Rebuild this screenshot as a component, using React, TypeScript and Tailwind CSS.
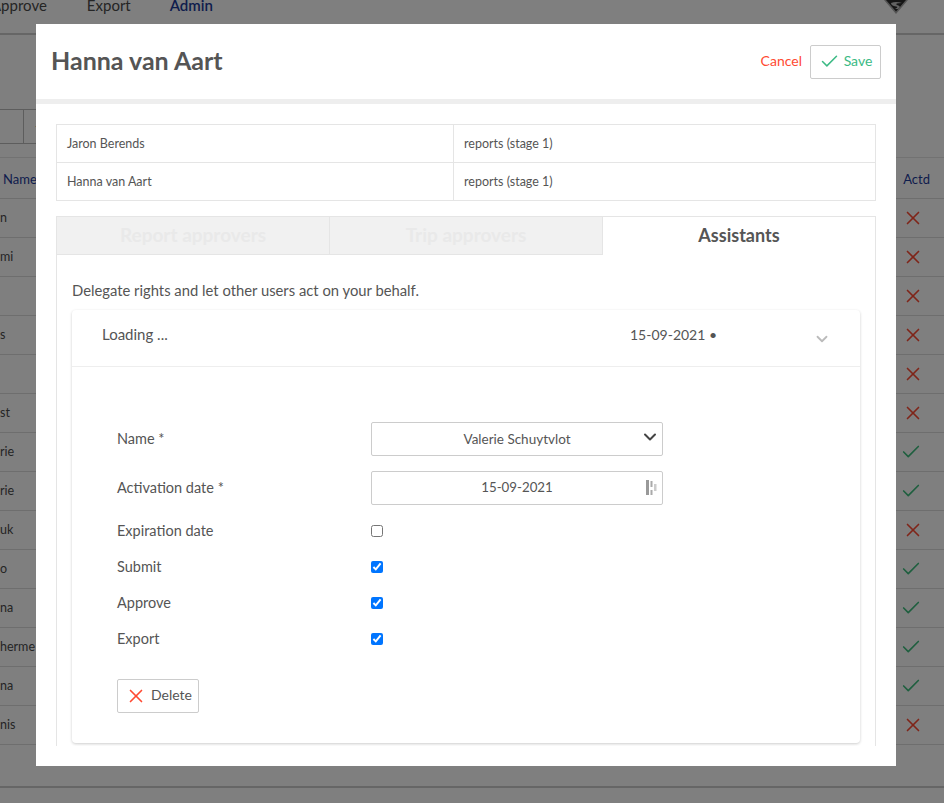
import React from "react";
import { X, Check, ChevronDown } from "lucide-react";

const rows: [string, boolean][] = [
  ["n", false], ["mi", false], ["", false], ["s", false], ["", false], ["st", false], ["rie", true],
  ["rie", true], ["uk", false], ["o", true], ["na", true], ["herme", true], ["na", true], ["nis", false],
];

function Background() {
  return (
    <div className="h-[803px] bg-white text-[13px] text-[#4a4a4a] overflow-hidden">
      <div className="h-[35px] border-b-2 border-[#ccc] flex items-start relative">
        <div className="flex gap-[40px] -ml-[9px] -mt-[5px] text-[15px] leading-[20px]">
          <span>Approve</span>
          <span>Export</span>
          <span className="text-[#1d3a9a] font-semibold -ml-[1px]">Admin</span>
        </div>
        <svg className="absolute left-[884px] top-0" width="24" height="14" viewBox="0 0 24 14">
          <path d="M0 0 L24 0 L12 14 Z" fill="#aaa" />
          <path d="M2 0 L22 0 L12 11.5 Z" fill="#2a2a2a" />
          <path d="M7 3 Q12 1 18 3 Q10 3 13 5 Q18 6 14 9 L11 9 Q15 7 12 6.5 Q7 5.5 7 3 Z" fill="#c4c4c4" />
        </svg>
      </div>
      <div className="h-[74px]" />
      <div className="h-[35px] w-[600px] border-y border-[#bbb] flex items-center">
        <div className="w-[24px] h-full border-r border-[#bbb]" />
        <span className="ml-[11px] text-[#555]">-</span>
      </div>
      <div className="h-[13px]" />
      <div className="h-[42px] pt-[4px] border-t border-[#e4e4e4] border-b border-b-[#ddd] flex items-center justify-between pr-[14px] text-[#1d3a9a]">
        <span className="pl-[3px]">Name</span>
        <span>Actd</span>
      </div>
      {rows.map(([t, ok], i) => (
        <div key={i} className="h-[39px] border-b border-[#ddd] flex items-center justify-between pr-[20px]">
          <span className="text-[12.5px]">{t}</span>
          {ok ? (
            <Check size={22} strokeWidth={1.8} className="text-[#3fbf7f] mr-[2px]" />
          ) : (
            <X size={22} strokeWidth={1.8} className="text-[#ff4a32]" />
          )}
        </div>
      ))}
      <div className="h-[43px] border-b-2 border-[#ccc]" />
    </div>
  );
}

function Field({ label, children }: { label: string; children: React.ReactNode }) {
  return (
    <div className="flex items-center min-h-[34px]">
      <span className="w-[254px] text-[14.5px] text-[#555] pb-[1px]">{label}</span>
      {children}
    </div>
  );
}

function DateGlyph() {
  return (
    <svg width="11" height="15" viewBox="0 0 11 15" className="absolute right-[5px] top-[8px]">
      <rect x="0" y="0" width="3" height="15" fill="#999" />
      <rect x="4.5" y="1" width="2" height="6" fill="#aaa" />
      <rect x="4.5" y="10" width="2" height="5" fill="#aaa" />
      <rect x="8" y="4" width="2.5" height="7" fill="#ccc" />
    </svg>
  );
}

function Modal() {
  return (
    <div className="fixed left-[36px] top-[24px] w-[860px] h-[742px] bg-white overflow-hidden text-[#555]">
      <div className="h-[80px] border-b-[5px] border-[#eee] flex items-center justify-between pl-[15px] pr-[15px]">
        <h1 className="text-[25px] font-bold pb-[2px]">Hanna van Aart</h1>
        <div className="flex items-center gap-[8px]">
          <span className="text-[14px] text-[#ff4a32] pb-[2px]">Cancel</span>
          <button className="w-[71px] h-[34px] border border-[#ccc] rounded-[2px] flex items-center justify-center gap-[4px] text-[14px] text-[#3cba85]">
            <Check size={21} strokeWidth={1.7} />
            <span className="pb-[2px]">Save</span>
          </button>
        </div>
      </div>
      <div className="px-[20px] pt-[20px]">
        <div className="border border-[#e5e5e5] text-[12.5px]">
          {["Jaron Berends", "Hanna van Aart"].map((n, i) => (
            <div key={n} className={`flex items-center ${i === 0 ? "h-[38px] border-b border-[#e5e5e5]" : "h-[37px]"}`}>
              <span className="w-[397px] pl-[10px] pt-[1px] self-stretch flex items-center border-r border-[#e5e5e5]">{n}</span>
              <span className="pl-[10px] pt-[1px]">reports (stage 1)</span>
            </div>
          ))}
        </div>
        <div className="mt-[15px] border-x border-t border-[#e5e5e5] h-[530px] overflow-hidden">
          <div className="flex h-[38px] text-[19px] font-bold text-center">
            <div className="w-[273px] bg-[#f1f1f1] border-r border-b border-[#e5e5e5] text-[#e9e9e9] flex items-center justify-center">Report approvers</div>
            <div className="w-[272px] bg-[#f1f1f1] border-b border-[#e5e5e5] text-[#e9e9e9] flex items-center justify-center">Trip approvers</div>
            <div className="flex-1 border-l border-[#e5e5e5] text-[18px] text-[#555] flex items-center justify-center pb-[2px]">Assistants</div>
          </div>
          <div className="px-[15px]">
            <p className="text-[14.8px] mt-[25px] leading-[20px]">Delegate rights and let other users act on your behalf.</p>
            <div className="mt-[10px] rounded-[4px] shadow-[0_1px_3px_rgba(0,0,0,0.2)]">
              <div className="h-[57px] border-b border-[#eee] flex items-center pl-[30px]">
                <span className="w-[528px] text-[15px] pb-[7px]">Loading ...</span>
                <span className="w-[183px] text-[14px] pb-[7px]">15-09-2021 •</span>
                <ChevronDown size={18} strokeWidth={2.4} className="text-[#bbb] mt-[1px]" />
              </div>
              <div className="pl-[45px] pt-[55px] pb-[30px]">
                <div className="flex flex-col gap-[15px]">
                  <Field label="Name *">
                    <div className="relative w-[292px] h-[34px] border border-[#ccc] rounded-[2px] flex items-center justify-center text-[13.5px]">
                      Valerie Schuytvlot
                      <ChevronDown size={20} strokeWidth={2.4} className="absolute right-[2px] top-[4px] text-[#444]" />
                    </div>
                  </Field>
                  <Field label="Activation date *">
                    <div className="relative w-[292px] h-[34px] border border-[#ccc] rounded-[2px] flex items-center justify-center text-[13.3px]">
                      <span>15-09-2021</span>
                      <DateGlyph />
                    </div>
                  </Field>
                </div>
                <div className="flex flex-col mt-[8px]">
                  {([["Expiration date", false], ["Submit", true], ["Approve", true], ["Export", true]] as [string, boolean][]).map(([l, c]) => (
                    <div key={l} className="flex items-center h-[36px]">
                      <span className="w-[254px] text-[14.5px] pb-[1px]">{l}</span>
                      <input type="checkbox" readOnly checked={c} className="m-0 w-[12px] h-[12px]" />
                    </div>
                  ))}
                </div>
                <button className="mt-[22px] w-[82px] h-[34px] border border-[#ccc] rounded-[2px] flex items-center justify-start pl-[7px] gap-[4px] text-[14px] text-[#555]">
                  <X size={22} strokeWidth={1.8} className="text-[#ff4a32]" />
                  <span className="pb-[3px]">Delete</span>
                </button>
              </div>
            </div>
          </div>
        </div>
      </div>
    </div>
  );
}

export default function App() {
  return (
    <div className="relative h-[803px] overflow-hidden" style={{ fontFamily: "Lato, 'Noto Sans', sans-serif" }}>
      <Background />
      <div className="fixed inset-0 bg-black/50" />
      <Modal />
    </div>
  );
}
